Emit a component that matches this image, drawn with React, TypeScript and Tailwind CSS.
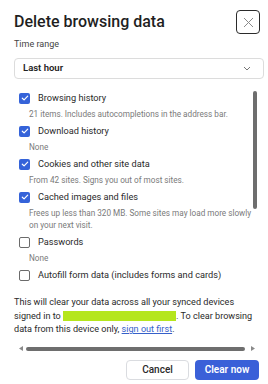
import React from "react";

const Check = ({ checked }: { checked: boolean }) =>
  checked ? (
    <div className="w-[11px] h-[11px] rounded-[2px] bg-[#3563d9] flex items-center justify-center shrink-0">
      <svg width="8" height="8" viewBox="0 0 8 8" fill="none">
        <path d="M1.3 4.2 L3.1 5.9 L6.7 2.2" stroke="white" strokeWidth="1.2" strokeLinecap="round" strokeLinejoin="round" />
      </svg>
    </div>
  ) : (
    <div className="w-[11px] h-[11px] rounded-[2px] border border-[#6b6b6b] bg-white shrink-0" />
  );

const items: { label: string; desc: string[]; checked: boolean }[] = [
  { label: "Browsing history", desc: ["21 items. Includes autocompletions in the address bar."], checked: true },
  { label: "Download history", desc: ["None"], checked: true },
  { label: "Cookies and other site data", desc: ["From 42 sites. Signs you out of most sites."], checked: true },
  {
    label: "Cached images and files",
    desc: ["Frees up less than 320 MB. Some sites may load more slowly", "on your next visit."],
    checked: true,
  },
  { label: "Passwords", desc: ["None"], checked: false },
  { label: "Autofill form data (includes forms and cards)", desc: [], checked: false },
];

export default function App() {
  return (
    <div
      className="w-[268px] h-[384px] bg-white overflow-hidden text-[#1f1f1f]"
      style={{ fontFamily: "Roboto, 'Noto Sans', sans-serif" }}
    >
      {/* Header */}
      <div className="flex items-start justify-between pl-[14px] pr-[8px] pt-[10px]">
        <div className="text-[16px] font-medium leading-[24px] text-[#1f1f1f]">Delete browsing data</div>
        <div className="w-[24px] h-[24px] rounded-[4px] border-[1.5px] border-[#2b2b2b] flex items-center justify-center">
          <svg width="11" height="11" viewBox="0 0 11 11">
            <path d="M1 1 L10 10 M10 1 L1 10" stroke="#8a8a8a" strokeWidth="1" />
          </svg>
        </div>
      </div>

      {/* Time range */}
      <div className="pl-[14px] mt-[3px] text-[9px] leading-[14px] text-[#444]">Time range</div>
      <div className="ml-[14px] mr-[4px] mt-[7px] h-[21px] border border-[#dcdcdc] rounded-[4px] flex items-center justify-between pl-[8px] pr-[12px]">
        <span className="text-[9.5px] font-semibold text-[#222]">Last hour</span>
        <svg width="8" height="5" viewBox="0 0 8 5">
          <path d="M1 1 L4 4 L7 1" stroke="#777" strokeWidth="1" fill="none" />
        </svg>
      </div>

      {/* List */}
      <div className="flex mt-[11px]">
        <div className="flex-1 pl-[19px]">
          {items.map((it) => (
            <div key={it.label} className="mb-[3px]">
              <div className="flex items-center h-[16px]">
                <Check checked={it.checked} />
                <span className="ml-[8px] text-[9.2px] leading-[16px] text-[#2a2a2a]">{it.label}</span>
              </div>
              {it.desc.length > 0 && (
                <div className="mt-[2px] pl-[10px] text-[8.2px] leading-[12px] text-[#7a7a7a]">
                  {it.desc.map((d) => (
                    <div key={d}>{d}</div>
                  ))}
                </div>
              )}
            </div>
          ))}
        </div>
        <div className="w-[15px] pr-[11px]">
          <div className="w-[4px] h-[118px] mt-[1px] rounded-full bg-[#6e6e6e]" />
        </div>
      </div>

      {/* Paragraph */}
      <div className="pl-[14px] pr-[8px] mt-[10px] text-[9.1px] leading-[13.5px] text-[#2a2a2a]">
        <div>This will clear your data across all your synced devices</div>
        <div className="flex items-center">
          <span>signed in to&nbsp;</span>
          <span className="inline-block w-[113px] h-[10px] bg-[#b5e61d]" />
          <span>. To clear browsing</span>
        </div>
        <div>
          data from this device only, <span className="text-[#3660c9] underline">sign out first</span>.
        </div>
      </div>

      {/* Horizontal scrollbar */}
      <div className="flex items-center pl-[19px] pr-[13px] mt-[9px] h-[6px]">
        <svg width="4" height="5" viewBox="0 0 4 5">
          <path d="M4 0 L0 2.5 L4 5 Z" fill="#8a8a8a" />
        </svg>
        <div className="flex-1 ml-[3px] mr-[6px] h-[4px] rounded-full bg-[#6e6e6e]" />
        <svg width="4" height="5" viewBox="0 0 4 5">
          <path d="M0 0 L4 2.5 L0 5 Z" fill="#8a8a8a" />
        </svg>
      </div>

      {/* Buttons */}
      <div className="flex justify-end gap-[6px] pr-[9px] mt-[8px]">
        <div className="w-[63px] h-[20px] rounded-[4px] border border-[#dadce0] bg-white flex items-center justify-center text-[10px] font-medium text-[#2a2a2a]">
          Cancel
        </div>
        <div className="w-[64px] h-[20px] rounded-[4px] bg-[#3a60d8] flex items-center justify-center text-[10px] font-semibold text-white">
          Clear now
        </div>
      </div>
    </div>
  );
}
